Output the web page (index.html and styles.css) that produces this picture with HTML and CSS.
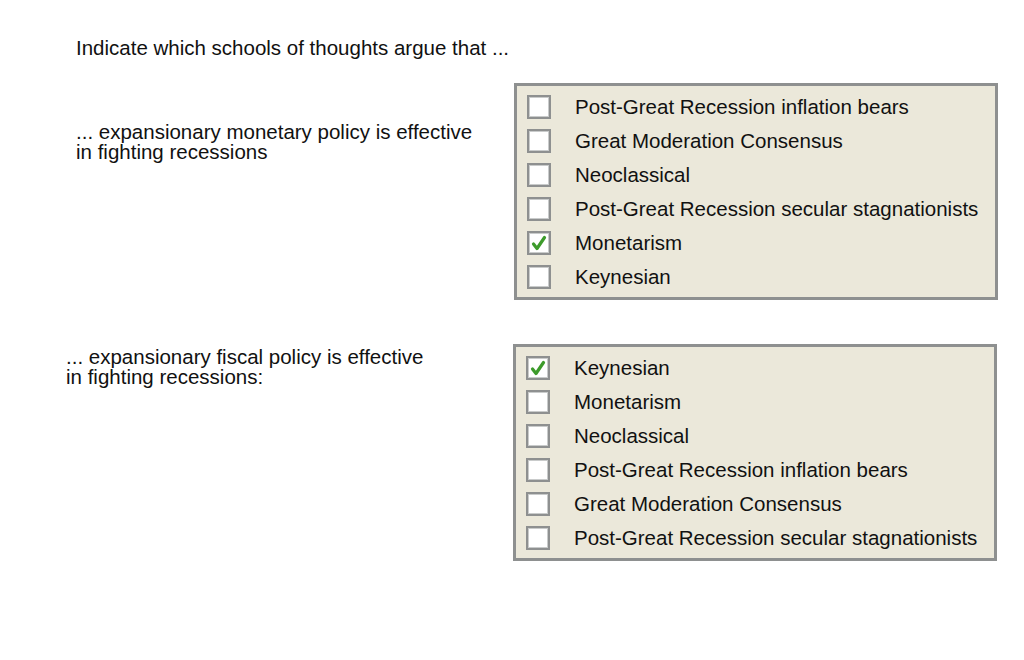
FILE: index.html
```html
<!DOCTYPE html>
<html>
<head>
    <title>Schools of thought</title>
    <link rel="stylesheet" href="styles.css">
</head>
<body>
    <p class="intro">Indicate which schools of thoughts argue that ...</p>

    <div class="question first">
        <p class="prompt">... expansionary monetary policy is effective<br>in fighting recessions</p>
        <div class="choices">
            <label class="choice"><span class="box"></span>Post-Great Recession inflation bears</label>
            <label class="choice"><span class="box"></span>Great Moderation Consensus</label>
            <label class="choice"><span class="box"></span>Neoclassical</label>
            <label class="choice"><span class="box"></span>Post-Great Recession secular stagnationists</label>
            <label class="choice"><span class="box"><svg viewBox="0 0 18 18" width="18" height="18"><path d="M3.5 10 L7 14.5 L14.5 3.5" fill="none" stroke="#3d9b2b" stroke-width="3.2" stroke-linecap="round" stroke-linejoin="round"/></svg></span>Monetarism</label>
            <label class="choice"><span class="box"></span>Keynesian</label>
        </div>
    </div>

    <div class="question second">
        <p class="prompt">... expansionary fiscal policy is effective<br>in fighting recessions:</p>
        <div class="choices">
            <label class="choice"><span class="box"><svg viewBox="0 0 18 18" width="18" height="18"><path d="M3.5 10 L7 14.5 L14.5 3.5" fill="none" stroke="#3d9b2b" stroke-width="3.2" stroke-linecap="round" stroke-linejoin="round"/></svg></span>Keynesian</label>
            <label class="choice"><span class="box"></span>Monetarism</label>
            <label class="choice"><span class="box"></span>Neoclassical</label>
            <label class="choice"><span class="box"></span>Post-Great Recession inflation bears</label>
            <label class="choice"><span class="box"></span>Great Moderation Consensus</label>
            <label class="choice"><span class="box"></span>Post-Great Recession secular stagnationists</label>
        </div>
    </div>
</body>
</html>
```

FILE: styles.css
```css
body {
    font-family: "Liberation Sans", Arial, sans-serif;
    background-color: #fff;
    color: #111;
    margin: 0;
}
p {
    margin: 0;
}
.intro {
    font-size: 20.5px;
    line-height: 22px;
    padding: 37px 0 0 76px;
}
.question {
    display: flex;
    align-items: flex-start;
}
.question.first {
    margin-top: 24px;
    padding-left: 76px;
}
.question.second {
    margin-top: 44px;
    padding-left: 66px;
}
.prompt {
    font-size: 20.5px;
    line-height: 20px;
    width: 438px;
}
.first .prompt {
    margin-top: 39px;
}
.second .prompt {
    width: 447px;
    margin-top: 3px;
}
.choices {
    width: 468px;
    background-color: #ebe8da;
    border: 3px solid #8e9090;
    padding: 4px 0 3px 10px;
}
.choice {
    display: flex;
    align-items: center;
    height: 34px;
    font-size: 20.5px;
}
.box {
    width: 20px;
    height: 20px;
    border: 2px solid #8e9090;
    box-shadow: inset 0 0 0 1px #c9cbcb;
    background-color: #fff;
    margin-right: 24px;
    display: flex;
    align-items: center;
    justify-content: center;
}
```
